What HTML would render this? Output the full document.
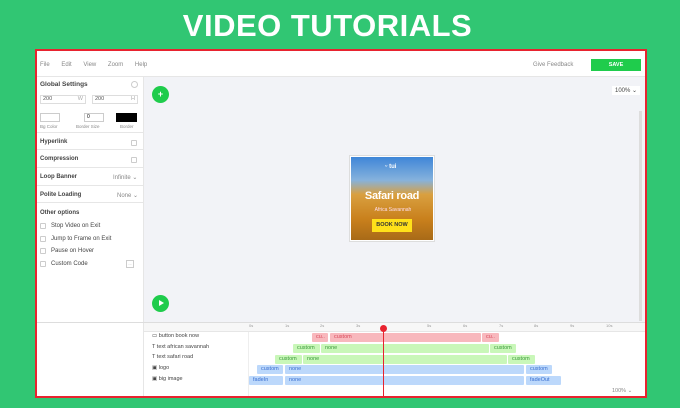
<!DOCTYPE html>
<html><head><style>
*{margin:0;padding:0;box-sizing:border-box}
body{width:680px;height:408px;background:#31c673;font-family:"Liberation Sans",sans-serif;position:relative;overflow:hidden}
.a{position:absolute}
.t{font-size:6px;color:#444}
.g{color:#888}
.bar{position:absolute;height:9px;font-size:5.5px;line-height:9px;padding-left:4px;border-radius:1px}
.r{background:#f8b8bd;color:#d9485a}
.gr{background:#c9f7b9;color:#3a9a3a}
.b{background:#bcd8fb;color:#3a6fd0}
.cb{position:absolute;width:6px;height:6px;border:1px solid #ccc;border-radius:1px;background:#fff}
.sep{position:absolute;left:0;width:107px;height:1px;background:#e6e6e6}
</style></head><body>
<div class="a" style="left:0;top:8px;width:655px;text-align:center;color:#fff;font-weight:bold;font-size:31px;letter-spacing:0.5px">VIDEO TUTORIALS</div>
<div class="a" style="left:35px;top:49px;width:612px;height:349px;border:2px solid #e8232f;background:#fff;overflow:hidden">
 <div class="a t g" style="left:3px;top:11px;word-spacing:10px">File Edit View Zoom Help</div>
 <div class="a t g" style="left:496px;top:11px">Give Feedback</div>
 <div class="a" style="left:554px;top:8px;width:50px;height:12px;background:#1fcc4c;color:#fff;font-size:5.5px;font-weight:bold;text-align:center;line-height:12px">SAVE</div>
 <div class="a" style="left:0;top:25px;width:608px;height:1px;background:#e6e6e6"></div>
 <div class="a" style="left:0;top:26px;width:107px;height:244px">
  <div class="a t" style="left:3px;top:4px;font-weight:bold;font-size:6.5px">Global Settings</div>
  <div class="a" style="left:94px;top:4px;width:7px;height:7px;border-radius:50%;border:1px solid #ccc"></div>
  <div class="a" style="left:3px;top:18px;width:46px;height:9px;border:1px solid #ddd;font-size:5.5px;padding-left:2px;color:#555">200<span style="float:right;color:#aaa;padding-right:2px">W</span></div>
  <div class="a" style="left:55px;top:18px;width:46px;height:9px;border:1px solid #ddd;font-size:5.5px;padding-left:2px;color:#555">200<span style="float:right;color:#aaa;padding-right:2px">H</span></div>
  <div class="a" style="left:3px;top:36px;width:20px;height:9px;border:1px solid #ccc"></div>
  <div class="a" style="left:47px;top:36px;width:20px;height:9px;border:1px solid #ccc;font-size:5px;padding-left:2px">0</div>
  <div class="a" style="left:79px;top:36px;width:21px;height:9px;background:#000"></div>
  <div class="a g" style="left:3px;top:47px;font-size:4.5px">Bg Color</div>
  <div class="a g" style="left:39px;top:47px;font-size:4.5px">Border Size</div>
  <div class="a g" style="left:83px;top:47px;font-size:4.5px">Border</div>
  <div class="sep" style="top:55px"></div>
  <div class="a t" style="left:3px;top:62px;font-weight:bold">Hyperlink</div><div class="cb" style="left:94px;top:63px"></div>
  <div class="sep" style="top:72px"></div>
  <div class="a t" style="left:3px;top:79px;font-weight:bold">Compression</div><div class="cb" style="left:94px;top:80px"></div>
  <div class="sep" style="top:90px"></div>
  <div class="a t" style="left:3px;top:97px;font-weight:bold">Loop Banner</div><div class="a t g" style="left:76px;top:97px">Infinite ⌄</div>
  <div class="sep" style="top:108px"></div>
  <div class="a t" style="left:3px;top:115px;font-weight:bold">Polite Loading</div><div class="a t g" style="left:80px;top:115px">None ⌄</div>
  <div class="sep" style="top:125px"></div>
  <div class="a t" style="left:3px;top:133px;font-weight:bold">Other options</div>
  <div class="cb" style="left:3px;top:146px"></div><div class="a t" style="left:14px;top:146px">Stop Video on Exit</div>
  <div class="cb" style="left:3px;top:159px"></div><div class="a t" style="left:14px;top:159px">Jump to Frame on Exit</div>
  <div class="cb" style="left:3px;top:171px"></div><div class="a t" style="left:14px;top:171px">Pause on Hover</div>
  <div class="cb" style="left:3px;top:184px"></div><div class="a t" style="left:14px;top:184px">Custom Code</div>
  <div class="a" style="left:89px;top:183px;width:8px;height:8px;border:1px solid #ccc;font-size:4px;text-align:center;color:#999">...</div>
 </div>
 <div class="a" style="left:106px;top:26px;width:1px;height:330px;background:#e6e6e6"></div>
 <div class="a" style="left:107px;top:26px;width:501px;height:245px;background:#f2f3f7"></div>
 <div class="a" style="left:602px;top:60px;width:3px;height:210px;background:#ddd"></div>
 <div class="a" style="left:115px;top:35px;width:17px;height:17px;border-radius:50%;background:#1fcc4c;color:#fff;font-size:9px;text-align:center;line-height:17px;font-weight:bold">+</div>
 <div class="a" style="left:115px;top:244px;width:17px;height:17px;border-radius:50%;background:#1fcc4c"></div>
 <div class="a" style="left:122px;top:249px;border-left:5px solid #fff;border-top:3.5px solid transparent;border-bottom:3.5px solid transparent"></div>
 <div class="a t" style="left:575px;top:35px;background:#fff;padding:1px 3px">100% ⌄</div>
 <div class="a" style="left:312px;top:104px;width:86px;height:87px;background:#fff;border:1px solid #ddd;padding:1px">
  <div style="width:82px;height:83px;background:linear-gradient(#3f86d8 0%,#86b2dc 28%,#d9a040 45%,#c9801c 75%,#a86a18 100%);position:relative">
   <div class="a" style="left:34px;top:7px;color:#fff;font-size:6px;font-weight:bold">ᵕ tui</div>
   <div class="a" style="left:0;top:33px;width:82px;text-align:center;color:#fff;font-weight:bold;font-size:11px;letter-spacing:-0.3px">Safari road</div>
   <div class="a" style="left:2px;top:50px;width:80px;text-align:center;color:#fde;font-size:5px">Africa Savannah</div>
   <div class="a" style="left:21px;top:62px;width:40px;height:13px;background:#ffe11a;font-size:5.5px;font-weight:bold;text-align:center;line-height:13px;color:#333">BOOK NOW</div>
  </div>
 </div>
 <div class="a" style="left:0;top:271px;width:608px;height:1px;background:#ddd"></div>
 <div class="a" style="left:107px;top:272px;width:501px;height:9px;background:#f7f7f7;border-bottom:1px solid #e6e6e6"></div>
 <div class="a" style="left:212px;top:272px;width:396px;font-size:4px;color:#999">
  <span class="a" style="left:0">0s</span><span class="a" style="left:36px">1s</span><span class="a" style="left:71px">2s</span><span class="a" style="left:107px">3s</span><span class="a" style="left:178px">5s</span><span class="a" style="left:214px">6s</span><span class="a" style="left:250px">7s</span><span class="a" style="left:285px">8s</span><span class="a" style="left:321px">9s</span><span class="a" style="left:357px">10s</span>
 </div>
 <div class="a" style="left:0;top:272px;width:608px;height:75px">
  <div class="a t" style="left:115px;top:10px;font-size:5.5px">▭ button book now</div>
  <div class="a t" style="left:115px;top:21px;font-size:5.5px">T text african savannah</div>
  <div class="a t" style="left:115px;top:31px;font-size:5.5px">T text safari road</div>
  <div class="a t" style="left:115px;top:42px;font-size:5.5px">▣ logo</div>
  <div class="a t" style="left:115px;top:53px;font-size:5.5px">▣ big image</div>
 </div>
 <div class="a" style="left:211px;top:281px;width:1px;height:66px;background:#eee"></div>
 <div class="a" style="left:107px;top:281px;width:501px;height:64px">
  <div class="bar r" style="left:168px;top:1px;width:16px">cu..</div>
  <div class="bar r" style="left:186px;top:1px;width:151px">custom</div>
  <div class="bar r" style="left:338px;top:1px;width:17px">cu..</div>
  <div class="bar gr" style="left:149px;top:12px;width:27px">custom</div>
  <div class="bar gr" style="left:177px;top:12px;width:168px">none</div>
  <div class="bar gr" style="left:346px;top:12px;width:26px">custom</div>
  <div class="bar gr" style="left:131px;top:23px;width:27px">custom</div>
  <div class="bar gr" style="left:159px;top:23px;width:204px">none</div>
  <div class="bar gr" style="left:364px;top:23px;width:27px">custom</div>
  <div class="bar b" style="left:113px;top:33px;width:26px">custom</div>
  <div class="bar b" style="left:141px;top:33px;width:239px">none</div>
  <div class="bar b" style="left:382px;top:33px;width:26px">custom</div>
  <div class="bar b" style="left:105px;top:44px;width:34px">fadeIn</div>
  <div class="bar b" style="left:141px;top:44px;width:239px">none</div>
  <div class="bar b" style="left:382px;top:44px;width:35px">fadeOut</div>
 </div>
 <div class="a" style="left:346px;top:276px;width:1px;height:72px;background:#e8232f"></div>
 <div class="a" style="left:343px;top:274px;width:7px;height:7px;border-radius:50%;background:#e8232f"></div>
 <div class="a t g" style="left:575px;top:337px;font-size:5.5px">100% ⌄</div>
</div>
</body></html>
